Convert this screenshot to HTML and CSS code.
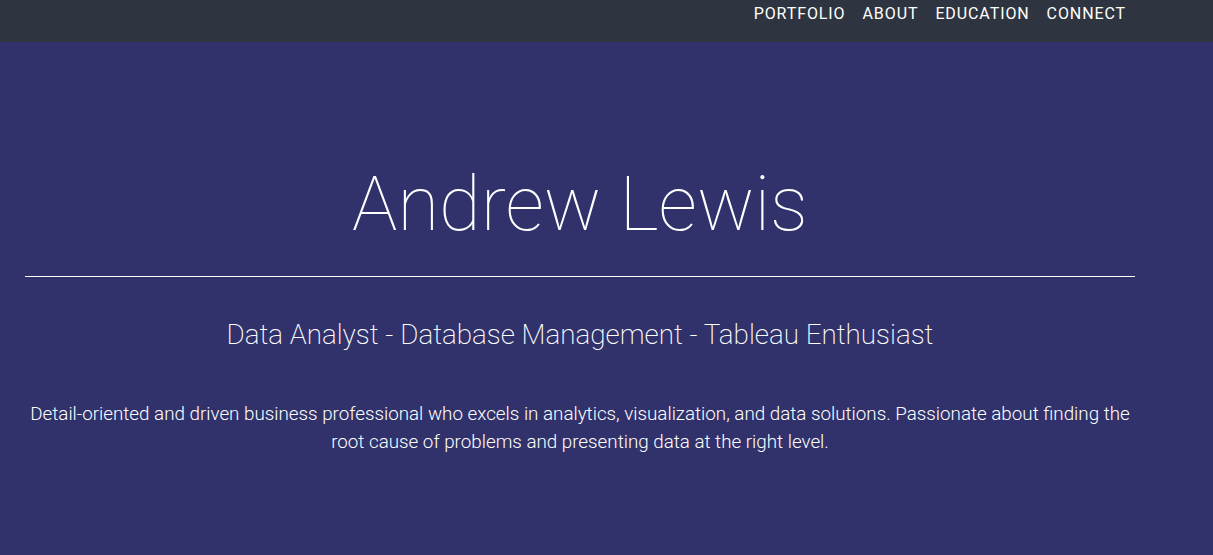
FILE: index.html
```html
<!DOCTYPE html>
<html lang="en">
<head>
<meta charset="utf-8">
<title>Andrew Lewis</title>
<link rel="stylesheet" href="styles.css">
</head>
<body>
<nav class="navbar">
  <div class="container nav-inner">
    <ul class="nav-links">
      <li><a href="#">PORTFOLIO</a></li>
      <li><a href="#">ABOUT</a></li>
      <li><a href="#">EDUCATION</a></li>
      <li><a href="#">CONNECT</a></li>
    </ul>
  </div>
</nav>
<header class="hero">
  <div class="container">
    <h1 class="name">Andrew Lewis</h1>
    <hr class="divider">
    <h2 class="tagline">Data Analyst - Database Management - Tableau Enthusiast</h2>
    <p class="summary">Detail-oriented and driven business professional who excels in analytics, visualization, and data solutions. Passionate about finding the root cause of problems and presenting data at the right level.</p>
  </div>
</header>
</body>
</html>
```
FILE: styles.css
```css
* { box-sizing: border-box; }
html, body { margin: 0; padding: 0; }
body {
  font-family: Roboto, "Liberation Sans", sans-serif;
  background: #31326b;
  color: #fff;
  height: 555px;
  overflow: hidden;
}
.container {
  width: 1110px;
  margin-left: 25px;
}
.navbar {
  background: #2f3540;
  height: 42px;
}
.nav-inner {
  display: flex;
  justify-content: flex-end;
}
.nav-links {
  list-style: none;
  margin: 0;
  padding: 0 9px 0 0;
  display: flex;
  gap: 17px;
}
.nav-links a {
  display: block;
  color: #fff;
  text-decoration: none;
  font-size: 16px;
  font-weight: 400;
  letter-spacing: 0.9px;
  line-height: 27px;
}
.hero {
  padding-top: 106px;
  text-align: center;
}
.name {
  margin: 0;
  font-size: 76px;
  font-weight: 100;
  line-height: 112px;
}
.divider {
  border: 0;
  border-top: 1px solid #fff;
  margin: 16px 0 0;
}
.tagline {
  margin: 38px 0 0;
  font-size: 27.8px;
  font-weight: 200;
  line-height: 40px;
}
.summary {
  margin: 45px 0 0;
  font-size: 18.8px;
  font-weight: 300;
  line-height: 28px;
}
```
